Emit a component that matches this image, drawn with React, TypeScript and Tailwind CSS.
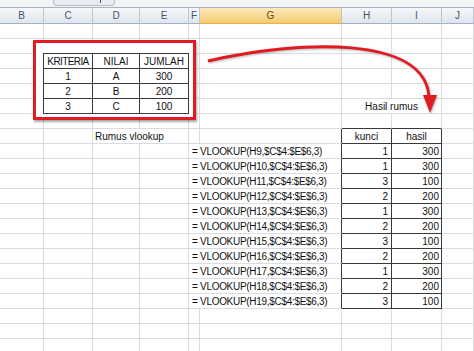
import React from 'react';

const COLS = 'grid grid-cols-[44px_49px_47px_49px_11px_142px_50px_50px_32px]';
const letters = ['B', 'C', 'D', 'E', 'F', 'G', 'H', 'I', 'J'];

const kunci = [1, 1, 3, 2, 1, 2, 3, 2, 1, 2, 3];
const hasil = [300, 300, 100, 200, 300, 200, 100, 200, 300, 200, 100];

const rb = (dark: boolean) => (dark ? 'border-r-[#3a3a3a]' : 'border-r-[#d9dde2]');
const bb = (dark: boolean) => (dark ? 'border-b-[#3a3a3a]' : 'border-b-[#d9dde2]');

function Cell({ className = '', children }: { className?: string; children?: React.ReactNode }) {
  return (
    <div
      className={`h-[15px] border-r border-b whitespace-nowrap text-[10px] leading-[13px] pt-[1px] text-[#111] ${className}`}
    >
      {children}
    </div>
  );
}

function Row({ r }: { r: number }) {
  const i = r - 9;
  const inTable = r >= 8 && r <= 19;
  const isFormula = r >= 9 && r <= 19;

  return (
    <>
      <Cell className={`${rb(false)} ${bb(false)}`} />
      <Cell className={`${rb(false)} ${bb(false)}`} />
      {r === 8 ? (
        <Cell className={`col-span-2 pl-[2px] ${rb(false)} ${bb(false)}`}>Rumus vlookup</Cell>
      ) : (
        <>
          <Cell className={`${rb(false)} ${bb(false)}`} />
          <Cell className={`${rb(false)} ${bb(false)}`} />
        </>
      )}
      {isFormula ? (
        <Cell className={`col-span-2 pl-[3px] tracking-[-0.3px] ${rb(true)} ${bb(false)}`}>
          = VLOOKUP(H{r},$C$4:$E$6,3)
        </Cell>
      ) : (
        <>
          <Cell className={`${rb(false)} ${bb(false)}`} />
          <Cell className={`${rb(r === 8)} ${bb(false)}`} />
        </>
      )}
      {r === 6 ? (
        <Cell className={`col-span-2 text-center ${rb(false)} ${bb(false)}`}>Hasil rumus</Cell>
      ) : (
        <>
          <Cell
            className={`${r === 8 ? 'text-center' : 'text-right pr-[3px]'} ${rb(inTable)} ${bb(inTable || r === 7)}`}
          >
            {r === 8 ? 'kunci' : isFormula ? kunci[i] : null}
          </Cell>
          <Cell
            className={`${r === 8 ? 'text-center' : 'text-right pr-[2px]'} ${rb(inTable)} ${bb(inTable || r === 7)}`}
          >
            {r === 8 ? 'hasil' : isFormula ? hasil[i] : null}
          </Cell>
        </>
      )}
      <Cell className={`${rb(false)} ${bb(false)}`} />
    </>
  );
}

const kriteria = ['KRITERIA', 'NILAI', 'JUMLAH', '1', 'A', '300', '2', 'B', '200', '3', 'C', '100'];

export default function App() {
  const rows = Array.from({ length: 22 }, (_, k) => k + 1);

  return (
    <div className="relative w-[474px] h-[351px] overflow-hidden bg-white font-['Liberation_Sans',Arial,sans-serif]">
      {/* strip above column headers */}
      <div className="h-[8px] bg-[#f3f4f6] border-b border-[#aab3bf] flex">
        <div className="ml-[53px] w-[62px] h-[6px] bg-[#e9ecf0] border border-t-0 border-[#b7bec8] rounded-b-[4px] flex justify-end pr-[13px]">
          <div className="w-[1px] h-[3px] bg-[#555]" />
        </div>
      </div>

      {/* column headers */}
      <div className={COLS}>
        {letters.map(l => (
          <div
            key={l}
            className={`h-[16px] border-r border-b border-r-[#bcc5d1] flex items-center justify-center text-[10px] ${
              l === 'G'
                ? 'bg-linear-to-b from-[#fde9bb] to-[#f5cc6e] border-b-[#e7b04c] text-[#5a4a2a]'
                : 'bg-linear-to-b from-[#f6f8fb] to-[#dfe5ec] border-b-[#a3b1c2] text-[#45556b]'
            }`}
          >
            {l}
          </div>
        ))}
      </div>

      {/* cells */}
      <div className={COLS}>
        {rows.map(r => (
          <Row key={r} r={r} />
        ))}
      </div>

      {/* red frame shape with lookup table */}
      <div className="absolute left-[33px] top-[40px] w-[163px] h-[80px] border-[3px] border-[#e11b1f] bg-white shadow-[1px_2px_2px_rgba(0,0,0,0.35)] pl-[7px] pt-[10px]">
        <div className="grid grid-cols-[49px_47px_49px] w-[146px] border-l border-t border-[#3a3a3a]">
          {kriteria.map((t, k) => (
            <div
              key={k}
              className={`h-[15px] border-r border-b border-[#3a3a3a] text-center text-[10px] leading-[13px] pt-[1px] text-[#111] ${
                t === 'KRITERIA' ? 'tracking-[-0.6px]' : ''
              }`}
            >
              {t}
            </div>
          ))}
        </div>
      </div>

      {/* curved arrow */}
      <svg
        className="absolute left-0 top-0 pointer-events-none drop-shadow-[1px_1px_1px_rgba(0,0,0,0.3)]"
        width="474"
        height="351"
        viewBox="0 0 474 351"
      >
        <path d="M208,61 C300,40 425,35 429,97" fill="none" stroke="#e11b1f" strokeWidth="3" />
        <polygon points="423,95 437,95 430,113" fill="#e11b1f" />
      </svg>
    </div>
  );
}
